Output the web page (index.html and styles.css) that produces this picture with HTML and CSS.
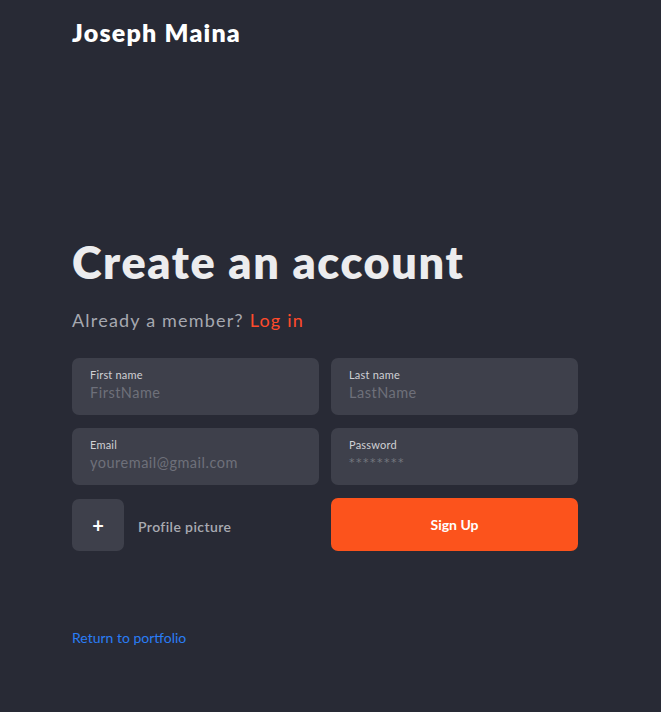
FILE: index.html
```html
<!DOCTYPE html>
<html lang="en">
<head>
<meta charset="utf-8">
<title>Create an account</title>
<link rel="stylesheet" href="styles.css">
</head>
<body>
<div class="page">
  <header class="brand">Joseph Maina</header>
  <main class="content">
    <h1 class="title">Create an account</h1>
    <p class="subtitle">Already a member? <a class="login" href="#">Log in</a></p>
    <form class="form">
      <label class="field">
        <span class="field-label">First name</span>
        <span class="field-value">FirstName</span>
      </label>
      <label class="field">
        <span class="field-label">Last name</span>
        <span class="field-value">LastName</span>
      </label>
      <label class="field">
        <span class="field-label">Email</span>
        <span class="field-value">youremail@gmail.com</span>
      </label>
      <label class="field">
        <span class="field-label">Password</span>
        <span class="field-value password">********</span>
      </label>
      <div class="picture">
        <span class="picture-btn">+</span>
        <span class="picture-label">Profile picture</span>
      </div>
      <button class="signup" type="button">Sign Up</button>
    </form>
  </main>
  <footer class="footer"><a class="return" href="#">Return to portfolio</a></footer>
</div>
</body>
</html>
```
FILE: styles.css
```css
* { box-sizing: border-box; }
html, body { margin: 0; padding: 0; }
body {
  background: #282a35;
  font-family: "Lato", "Noto Sans", sans-serif;
  color: #e8e8ea;
  width: 661px;
  height: 712px;
  overflow: hidden;
}
.page {
  padding: 17px 0 0 72px;
}
.brand {
  font-size: 25px;
  font-weight: 800;
  color: #ffffff;
  line-height: 30px;
  letter-spacing: 1.2px;
}
.content {
  margin-top: 187px;
  width: 506px;
}
.title {
  margin: 0;
  font-size: 45px;
  font-weight: 800;
  line-height: 56px;
  color: #ececee;
  letter-spacing: 1.6px;
}
.subtitle {
  margin: 19px 0 0;
  font-size: 18px;
  line-height: 22px;
  color: #a6a8b0;
  letter-spacing: 1.2px;
}
.login {
  color: #ff4a2b;
  text-decoration: none;
}
.form {
  margin-top: 27px;
  display: grid;
  grid-template-columns: 247px 247px;
  column-gap: 12px;
  row-gap: 13px;
}
.field {
  display: flex;
  flex-direction: column;
  height: 57px;
  background: #3e404b;
  border-radius: 7px;
  padding: 10px 18px 0;
}
.field-label {
  font-size: 11px;
  line-height: 13px;
  color: #d0d0d4;
  letter-spacing: 0.2px;
}
.field-value {
  margin-top: 2px;
  font-size: 14.5px;
  line-height: 20px;
  color: #6e707a;
  letter-spacing: 0.5px;
}
.password {
  margin-top: 3px;
  font-family: "DejaVu Sans", sans-serif;
  font-size: 11px;
  letter-spacing: 1.5px;
  line-height: 18px;
  color: #75777f;
}
.picture {
  display: flex;
  align-items: center;
  gap: 14px;
}
.picture-btn {
  width: 52px;
  height: 52px;
  border-radius: 7px;
  background: #3e404b;
  color: #ffffff;
  display: flex;
  align-items: center;
  justify-content: center;
  font-size: 20px;
  font-weight: 700;
}
.picture-label {
  font-size: 14px;
  font-weight: 600;
  color: #a9abb2;
  padding-top: 3px;
  letter-spacing: 0.4px;
}
.signup {
  height: 53px;
  border: none;
  border-radius: 7px;
  background: #fc531c;
  color: #ffffff;
  font-family: inherit;
  font-size: 14px;
  font-weight: 700;
  cursor: pointer;
  padding-bottom: 2px;
}
.footer {
  margin-top: 76px;
}
.return {
  color: #2a7df6;
  font-size: 14px;
  text-decoration: none;
}
```
